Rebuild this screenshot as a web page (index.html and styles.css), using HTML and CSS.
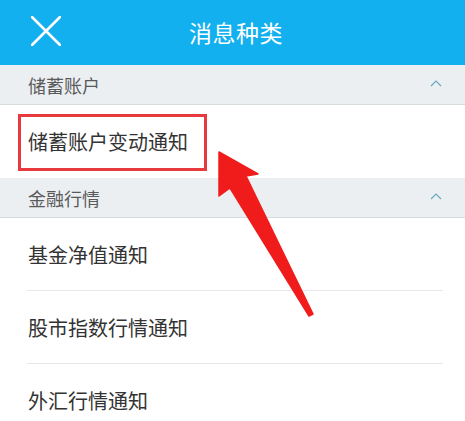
FILE: index.html
```html
<!DOCTYPE html>
<html lang="zh-CN">
<head>
    <meta charset="UTF-8">
    <meta name="viewport" content="width=device-width, initial-scale=1.0">
    <title>消息种类</title>
    <link rel="stylesheet" href="styles.css">
</head>
<body>

    <div class="screen">
        <!-- Top bar -->
        <div class="top-bar">
            <svg class="close-icon" width="30" height="30" viewBox="0 0 30 30">
                <path d="M1 1 L29 29 M29 1 L1 29" stroke="#fff" stroke-width="2.6" stroke-linecap="round"/>
            </svg>
            <div class="title">消息种类</div>
        </div>

        <!-- Group: savings -->
        <div class="group-head">
            <span>储蓄账户</span>
            <svg class="chevron" width="12" height="7" viewBox="0 0 12 7">
                <path d="M1 6 L6 1 L11 6" fill="none" stroke="#6aaab8" stroke-width="1.2"/>
            </svg>
        </div>
        <div class="item no-line">储蓄账户变动通知</div>

        <!-- Group: market -->
        <div class="group-head">
            <span>金融行情</span>
            <svg class="chevron" width="12" height="7" viewBox="0 0 12 7">
                <path d="M1 6 L6 1 L11 6" fill="none" stroke="#6aaab8" stroke-width="1.2"/>
            </svg>
        </div>
        <div class="item">基金净值通知</div>
        <div class="item">股市指数行情通知</div>
        <div class="item no-line">外汇行情通知</div>

        <!-- Annotation overlay -->
        <div class="mark-box"></div>
        <svg class="arrow" width="465" height="421" viewBox="0 0 465 421">
            <polygon points="219,152 258,174 246,176 313,314 309,316 230,188 219,196" fill="#f01c1c" stroke="#f01c1c" stroke-width="1.5" stroke-linejoin="round"/>
        </svg>
    </div>

</body>
</html>
```

FILE: styles.css
```css
/* General Styles */
body {
    margin: 0;
    padding: 0;
    font-family: 'Noto Sans CJK SC', 'Noto Sans', sans-serif;
    background: #fff;
}

.screen {
    position: relative;
    width: 465px;
    height: 421px;
    overflow: hidden;
    background: #fff;
}

/* Top bar */
.top-bar {
    height: 65px;
    background: #12b0ee;
    display: flex;
    align-items: center;
    position: relative;
}

.close-icon {
    margin-left: 31px;
    margin-top: -3px;
}

.title {
    position: absolute;
    left: 0;
    right: 0;
    top: 0;
    line-height: 65px;
    text-align: center;
    padding-left: 7px;
    color: #fff;
    font-size: 23px;
    letter-spacing: 0.5px;
}

/* Group headers */
.group-head {
    height: 39px;
    background: #ebeff2;
    border-bottom: 1px solid #d6dbde;
    display: flex;
    align-items: center;
    justify-content: space-between;
    padding: 0 22px 0 28px;
    color: #5a5a5a;
    font-size: 18px;
}

.chevron {
    margin-right: 1px;
    margin-top: -3px;
}

/* List items */
.item {
    height: 72px;
    margin: 0 22px 0 27px;
    border-bottom: 1px solid #e6e8ea;
    display: flex;
    align-items: center;
    padding-left: 1px;
    color: #333;
    font-size: 20px;
}

.item.no-line {
    border-bottom: 1px solid transparent;
}

/* Annotation */
.mark-box {
    position: absolute;
    left: 18px;
    top: 114px;
    width: 183px;
    height: 51px;
    border: 3px solid #e8393e;
}

.arrow {
    position: absolute;
    left: 0;
    top: 0;
}
```
